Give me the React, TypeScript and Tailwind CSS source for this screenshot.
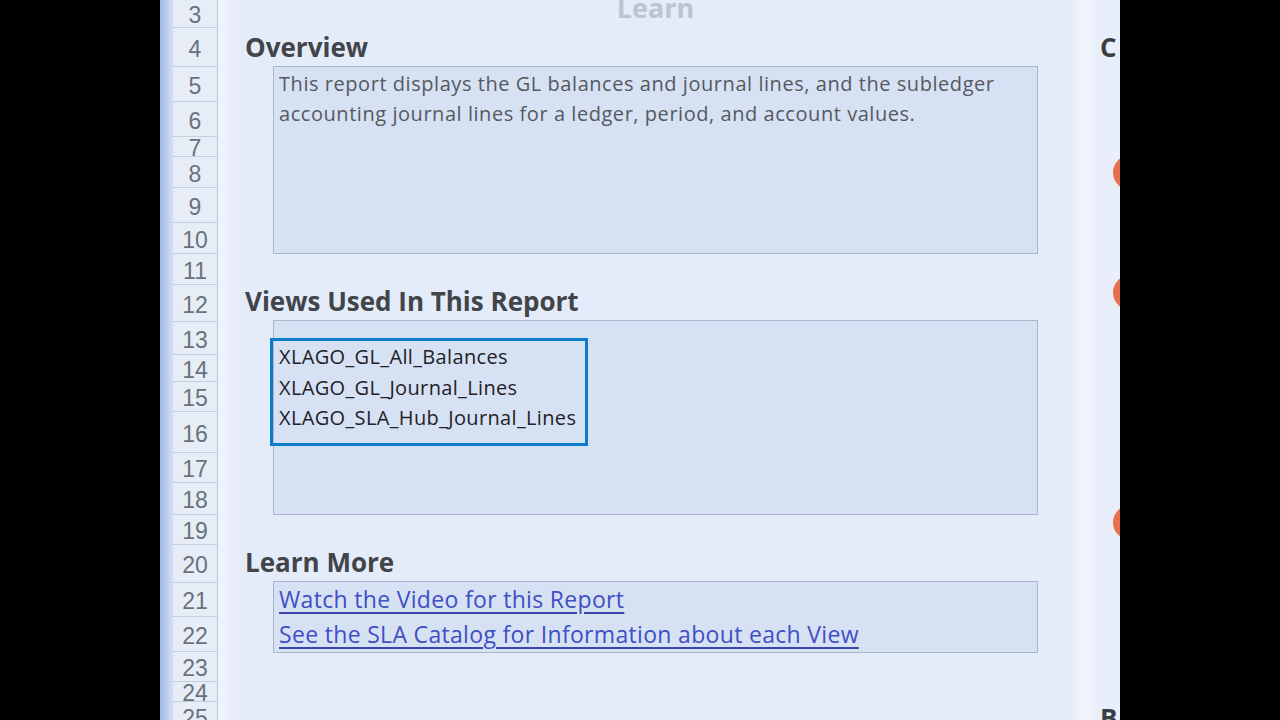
import React from 'react';

const rows: { n: number; h: number }[] = [
  { n: 3, h: 28 },
  { n: 4, h: 39 },
  { n: 5, h: 35 },
  { n: 6, h: 35 },
  { n: 7, h: 20 },
  { n: 8, h: 31 },
  { n: 9, h: 35 },
  { n: 10, h: 31 },
  { n: 11, h: 31 },
  { n: 12, h: 37 },
  { n: 13, h: 33 },
  { n: 14, h: 27 },
  { n: 15, h: 30 },
  { n: 16, h: 41 },
  { n: 17, h: 30 },
  { n: 18, h: 32 },
  { n: 19, h: 30 },
  { n: 20, h: 38 },
  { n: 21, h: 34 },
  { n: 22, h: 35 },
  { n: 23, h: 30 },
  { n: 24, h: 20 },
  { n: 25, h: 30 },
];

const views = ['XLAGO_GL_All_Balances', 'XLAGO_GL_Journal_Lines', 'XLAGO_SLA_Hub_Journal_Lines'];

const links = ['Watch the Video for this Report', 'See the SLA Catalog for Information about each View'];

const sans = { fontFamily: '"Open Sans", "Noto Sans", sans-serif' };

const RowHeaders: React.FC = () => (
  <div className="flex h-full w-[45px] flex-col overflow-hidden border-r border-[#b9c5d8] bg-[#e7edf7]">
    {rows.map((r) => (
      <div
        key={r.n}
        className="flex shrink-0 items-center justify-center overflow-hidden border-b border-[#c3cede] pt-[3px] text-[23px] leading-[24px] text-[#6a717b]"
        style={{ height: r.h, fontFamily: '"Liberation Sans", Arial, sans-serif' }}
      >
        {r.n}
      </div>
    ))}
  </div>
);

const SectionTitle: React.FC<{ children: React.ReactNode; className?: string }> = ({ children, className }) => (
  <h2 className={`h-[30px] text-[26px] font-bold leading-[30px] text-[#414449] ${className ?? ''}`} style={sans}>
    {children}
  </h2>
);

export default function App() {
  return (
    <div className="flex h-[720px] w-[1280px] overflow-hidden bg-black">
      <div className="w-[160px] shrink-0 bg-black" />

      <div className="flex h-full w-[960px] shrink-0 overflow-hidden">
        {/* left blue stripe */}
        <div className="h-full w-[13px] shrink-0 bg-linear-to-r from-[#9fbbe6] to-[#d3e0f4]" />
        <RowHeaders />

        {/* sheet content */}
        <div className="flex h-full flex-1 bg-[#e4ebf9]">
          <div className="h-full w-[27px] shrink-0 bg-linear-to-r from-[#f0f4fc] to-[#e4ebf9]" />

          <div className="flex w-[827px] shrink-0 flex-col">
            <div className="ml-[28px] h-[32px] w-[765px] overflow-hidden text-center">
              <div className="-mt-[6px] text-[27px] font-bold leading-[27px] text-[#bcc4d0]" style={sans}>
                Learn
              </div>
            </div>

            <SectionTitle>Overview</SectionTitle>
            <div
              className="mt-[4px] ml-[28px] h-[188px] w-[765px] border border-[#a9b6cc] bg-[#d6e1f4] pt-[2px] pl-[5px] text-[20px] leading-[30px] tracking-[0.55px] text-[#55595f]"
              style={sans}
            >
              This report displays the GL balances and journal lines, and the subledger
              <br />
              accounting journal lines for a ledger, period, and account values.
            </div>

            <SectionTitle className="mt-[32px]">Views Used In This Report</SectionTitle>
            <div className="relative mt-[4px] ml-[28px] h-[195px] w-[765px] border border-[#a9b6cc] bg-[#d6e1f4]">
              <div className="pt-[21px] pl-[5px] text-[20px] leading-[30.5px] tracking-[0.35px] text-[#1f2226]" style={sans}>
                {views.map((v) => (
                  <div key={v}>{v}</div>
                ))}
              </div>
              <div className="absolute top-[17px] -left-[4px] h-[108px] w-[318px] border-[3px] border-[#0a7acb]" />
            </div>

            <SectionTitle className="mt-[32px]">Learn More</SectionTitle>
            <div className="mt-[4px] ml-[28px] h-[72px] w-[765px] border border-[#a9b6cc] bg-[#d6e1f4] pl-[5px]" style={sans}>
              {links.map((l) => (
                <div key={l} className="h-[35px] text-[23px] leading-[35px] tracking-[0.32px]">
                  <a href="#" className="text-[#3f4fc4] underline decoration-[#3a47a8] underline-offset-[4px]">
                    {l}
                  </a>
                </div>
              ))}
            </div>
          </div>

          {/* lighter divider band */}
          <div className="h-full w-[25px] shrink-0 bg-linear-to-r from-[#e6edfa] via-[#f1f5fd] to-[#eaf0fb]" />

          {/* clipped next column */}
          <div className="flex h-full w-[23px] shrink-0 flex-col overflow-hidden bg-[#e9effa]">
            <div className="mt-[32px] h-[30px] shrink-0 pl-[3px] text-[26px] font-bold leading-[30px] text-[#3a3d42]" style={sans}>
              C
            </div>
            <div className="mt-[93px] ml-[16px] h-[35px] w-[36px] shrink-0 rounded-full bg-[#e66f4c]" />
            <div className="mt-[85px] ml-[16px] h-[35px] w-[36px] shrink-0 rounded-full bg-[#e66f4c]" />
            <div className="mt-[195px] ml-[16px] h-[35px] w-[36px] shrink-0 rounded-full bg-[#e66f4c]" />
            <div className="mt-[163px] h-[30px] shrink-0 pl-[3px] text-[26px] font-bold leading-[30px] text-[#3a3d42]" style={sans}>
              B
            </div>
          </div>
        </div>
      </div>

      <div className="flex-1 bg-black" />
    </div>
  );
}
